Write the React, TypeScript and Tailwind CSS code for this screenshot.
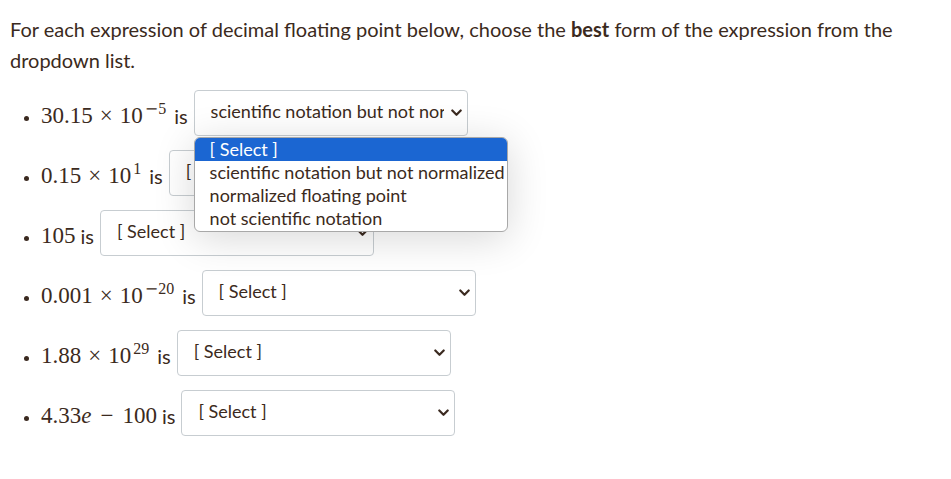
import React from 'react';

const textColor = 'text-[#3b2a20]';

function Chevron() {
  return (
    <svg width="11" height="8" viewBox="0 0 11 8" className="shrink-0">
      <path d="M1.3 1.5 L5.5 5.8 L9.7 1.5" fill="none" stroke="#3b2a20" strokeWidth="2.2" strokeLinecap="round" strokeLinejoin="round" />
    </svg>
  );
}

function FakeSelect({ value, open = false }: { value: string; open?: boolean }) {
  return (
    <div className="relative shrink-0">
      <div className="flex h-[46px] w-[274px] items-center justify-between rounded-[4px] border border-[#c7cdd1] bg-white pl-4 pr-[5px]">
        <span className={`overflow-hidden whitespace-nowrap text-[18px] pb-[3px] ${textColor} ${value.length > 20 ? 'w-[233px]' : ''}`}>{value}</span>
        <Chevron />
      </div>
      {open && (
        <div className="absolute left-0 top-[47px] z-10 w-[314px] overflow-hidden rounded-[6px] border border-[#a8a8a8] bg-white pb-[1px] shadow-[0_6px_40px_rgba(0,0,0,0.16)]">
          <div className="h-[23px] bg-[#1b66d2] pl-[15px] text-[18px] leading-[22px] text-white">[ Select ]</div>
          {['scientific notation but not normalized', 'normalized floating point', 'not scientific notation'].map((o) => (
            <div key={o} className={`h-[23px] pl-[15px] text-[18px] leading-[22px] whitespace-nowrap ${textColor}`}>{o}</div>
          ))}
        </div>
      )}
    </div>
  );
}

function Sup({ children, neg = false }: { children: React.ReactNode; neg?: boolean }) {
  return (
    <span className="relative -top-[9px] ml-[2px] mr-[3px] text-[16px]">
      {neg && <span className="[font-family:'DejaVu_Serif',serif]">−</span>}
      {children}
    </span>
  );
}

function Row({ math, value, open }: { math: React.ReactNode; value: string; open?: boolean }) {
  return (
    <li className="flex h-[46px] items-center">
      <span className="mr-[12px] ml-[24px] mt-[10px] h-[5px] w-[5px] shrink-0 rounded-full bg-[#3b2a20]" />
      <span className="whitespace-nowrap pt-[6px] text-[23px] [font-family:'Liberation_Serif',serif]">{math}</span>
      <span className="ml-[5px] mr-[6px] pt-[6px] text-[20px]">is</span>
      <FakeSelect value={value} open={open} />
    </li>
  );
}

const times = <span className="mx-[7px]">×</span>;

export default function App() {
  return (
    <div className={`min-h-[479px] w-[951px] bg-white pl-[10px] pt-[14px] ${textColor} [font-family:Lato,'Noto_Sans',sans-serif]`}>
      <p className="text-[20px] leading-[31px]">
        For each expression of decimal floating point below, choose the <strong>best</strong> form of the expression from the dropdown list.
      </p>
      <ul className="mt-[14px] -ml-[10px] flex flex-col gap-[14px]">
        <Row math={<>30.15{times}10<Sup neg>5</Sup></>} value="scientific notation but not normalized" open />
        <Row math={<>0.15{times}10<Sup>1</Sup></>} value="[ Select ]" />
        <Row math={<>105</>} value="[ Select ]" />
        <Row math={<>0.001{times}10<Sup neg>20</Sup></>} value="[ Select ]" />
        <Row math={<>1.88{times}10<Sup>29</Sup></>} value="[ Select ]" />
        <Row math={<>4.33<i>e</i><span className="mx-[9px]">−</span>100</>} value="[ Select ]" />
      </ul>
    </div>
  );
}
